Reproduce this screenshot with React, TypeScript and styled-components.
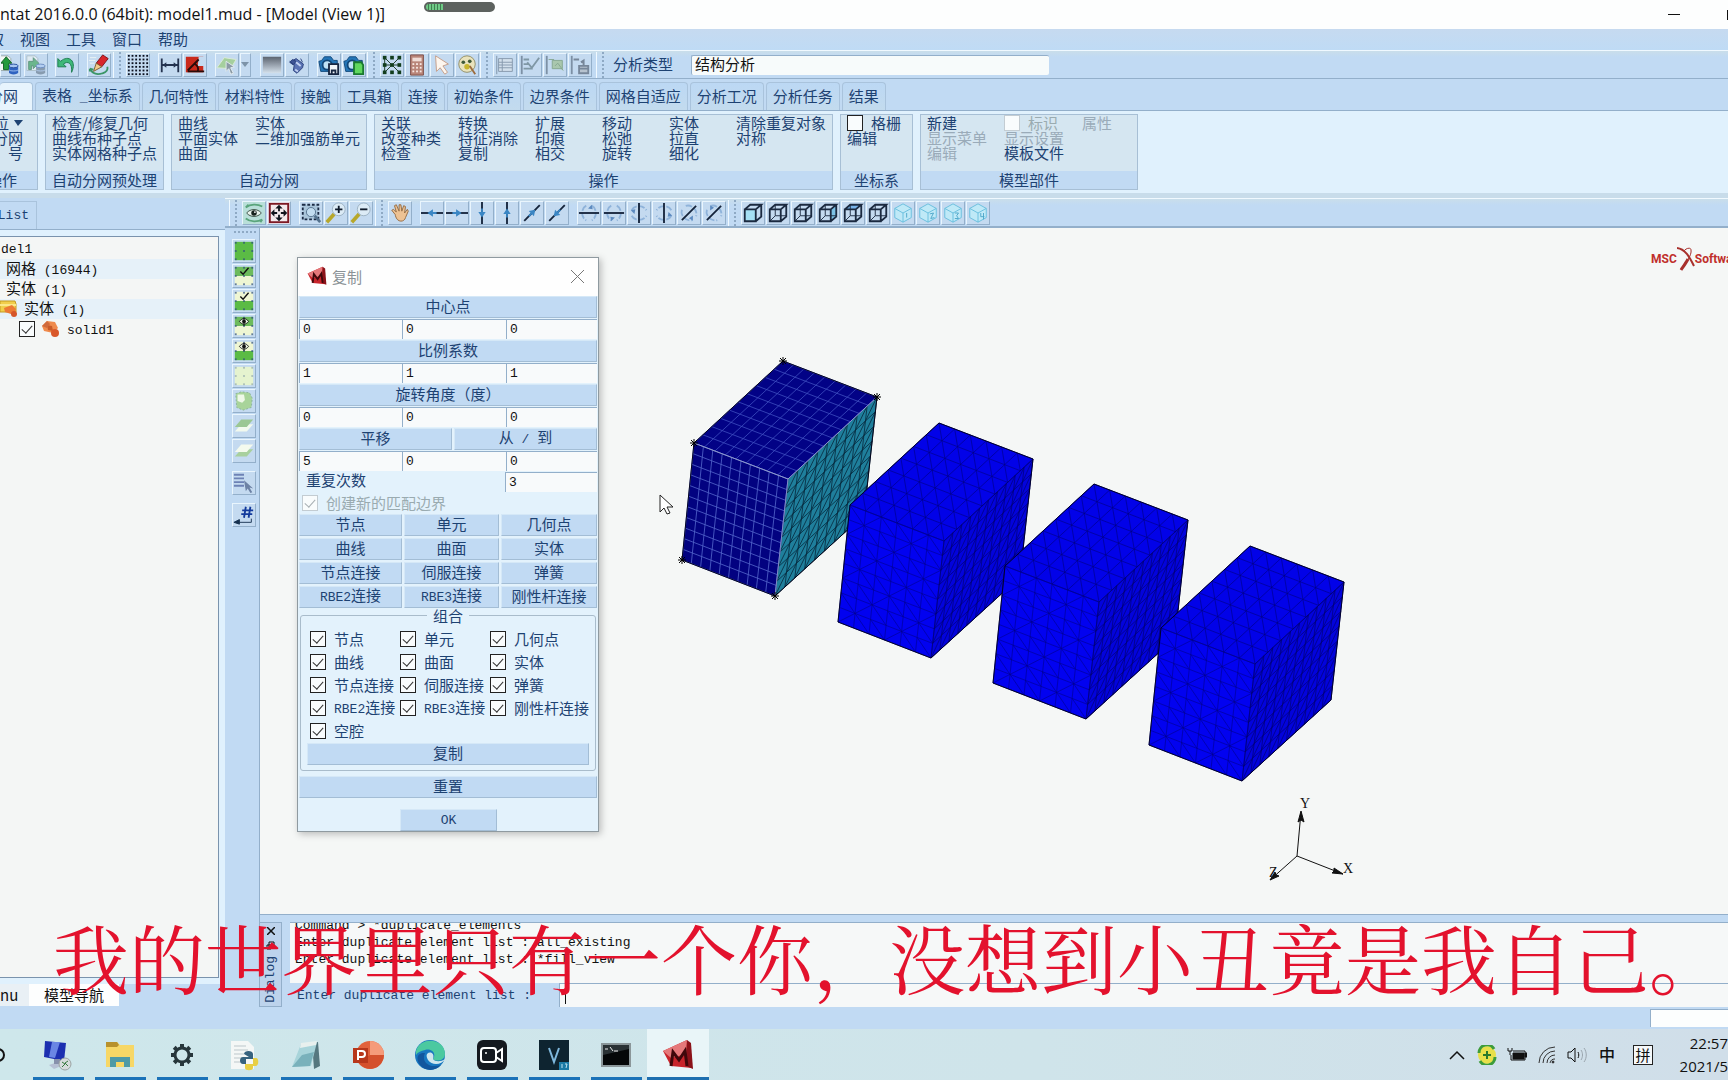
import React from "react";
import styled, { createGlobalStyle, css } from "styled-components";

const ink = "#1d4272";
const line = "#93afca";
const blue = "#c1daf3";
const pale = "#e0f1fd";

const GlobalStyle = createGlobalStyle`
  *, *::before, *::after { box-sizing: border-box; }
  body {
    margin: 0;
    overflow: hidden;
    color: ${ink};
    font: 400 15px/15px "Noto Sans CJK SC", sans-serif;
    white-space: nowrap;
  }
  button, input {
    margin: 0;
    padding: 0;
    border: 0;
    background: none;
    color: inherit;
    font: inherit;
  }
  svg { display: block; flex: none; }
`;

const Latin = styled.span`
  font: 400 13px/15px "Liberation Mono", monospace;
  white-space: pre;
`;

function Mixed({ text }: { text: string }) {
  return (
    <>
      {text.split(/([\x20-\x7e]+)/).map((part, i) =>
        i % 2 ? <Latin key={i}>{part}</Latin> : part
      )}
    </>
  );
}

/* ---------- frame ---------- */

const Window = styled.div`
  position: relative;
  display: flex;
  flex-direction: column;
  height: 100vh;
  overflow: hidden;
  background: ${blue};
`;

const TitleBar = styled.header`
  position: relative;
  display: flex;
  align-items: center;
  height: 29px;
  flex: none;
  background: #fdfefe;
  color: #111;
  font: 400 16px/20px "Noto Sans", sans-serif;
`;

const TitleText = styled.span`
  flex: 1;
  padding-bottom: 2px;
  font-family: "Open Sans", sans-serif;
`;

const BatteryPill = styled.div`
  position: absolute;
  left: 424px;
  top: 2px;
  width: 71px;
  height: 10px;
  border-radius: 5px;
  border: 2px solid #5d625f;
  background: linear-gradient(90deg, transparent 17px, #5d625f 17px),
    repeating-linear-gradient(90deg, #6fca86 0 2px, #3f7f50 2px 3px);
`;

const CaptionButton = styled.button`
  width: 60px;
  height: 28px;
  display: grid;
  place-items: center;
  overflow: hidden;
  &:last-child {
    width: 24px;
    justify-content: end;
  }
`;

const MenuBar = styled.nav`
  display: flex;
  align-items: center;
  gap: 16px;
  height: 22px;
  flex: none;
  padding-bottom: 3px;
  border-bottom: 1px solid #f0f9ff;
  background: linear-gradient(#c6daf0, #bfdbf5);
`;

const MenuItem = styled.button<{ $cut?: number }>`
  ${(p) =>
    p.$cut &&
    css`
      width: ${p.$cut}px;
      overflow: hidden;
      display: flex;
      justify-content: flex-end;
    `}
`;

const Toolbar = styled.div<{ $tall?: boolean }>`
  display: flex;
  align-items: center;
  gap: 1px;
  height: ${(p) => (p.$tall ? 30 : 28)}px;
  flex: none;
  overflow: hidden;
  border-top: ${(p) => (p.$tall ? "1px solid #f0f9ff" : "0")};
  border-bottom: ${(p) => (p.$tall ? 2 : 1)}px solid ${line};
  background: linear-gradient(#cadeea, ${blue} 6px);
`;

const ToolButton = styled.button<{ $lead?: number; $w?: number; $tint?: string }>`
  display: flex;
  align-items: center;
  justify-content: ${(p) => (p.$w ? "flex-end" : "center")};
  width: ${(p) => p.$w ?? 24}px;
  height: 24px;
  flex: none;
  overflow: hidden;
  margin-left: ${(p) => p.$lead ?? 0}px;
  border: 1px solid #e9f5fd;
  border-right-color: ${line};
  border-bottom-color: ${line};
  background: ${(p) => p.$tint ?? "#c4daf0"};
`;

const Grip = styled.i<{ $lead?: number }>`
  width: 12px;
  height: 26px;
  flex: none;
  margin-left: ${(p) => p.$lead ?? 0}px;
  border-left: 1px solid #f0f9ff;
  background: radial-gradient(circle, #8ea9c4 1px, transparent 1px) 4px 3px / 4px 4px repeat-y;
`;

const FieldLabel = styled.label`
  margin: 0 17px 0 4px;
  padding-bottom: 3px;
`;

const AnalysisInput = styled.input`
  width: 358px;
  height: 20px;
  padding: 0 3px 3px;
  border-top: 1px solid ${line};
  border-left: 1px solid ${line};
  border-radius: 2px;
  background: #f7fbfb;
  color: #111;
`;

/* ---------- ribbon ---------- */

const Tabs = styled.div`
  display: flex;
  align-items: flex-end;
  gap: 2px;
  height: 32px;
  flex: none;
  border-bottom: 1px solid ${line};
`;

const Tab = styled.button<{ $active?: boolean }>`
  height: 28px;
  padding: 0 6px 2px;
  border: 1px solid #a9c3dc;
  border-bottom: 0;
  border-radius: 4px 4px 0 0;
  background: ${(p) => (p.$active ? "#e7f4fd" : "linear-gradient(#bcd8f4, #c3dbee)")};
  ${(p) =>
    p.$active &&
    css`
      display: flex;
      align-items: center;
      justify-content: flex-end;
      width: 33px;
      padding: 0 14px 2px 0;
      overflow: hidden;
      border-left: 0;
    `}
`;

const Ribbon = styled.div`
  display: flex;
  gap: 7px;
  height: 82px;
  flex: none;
  padding: 3px 0;
  background: ${pale};
`;

const Strip = styled.div`
  height: 5px;
  flex: none;
  background: #c8dcea;
`;

const Group = styled.section<{ $w: number; $cut?: boolean }>`
  display: flex;
  flex-direction: column;
  width: ${(p) => p.$w}px;
  overflow: hidden;
  border: 1px solid #a7bfd5;
  border-left-width: ${(p) => (p.$cut ? 0 : 1)}px;
  background: #d5e6f1;
`;

const GroupBody = styled.div<{ $cols: string }>`
  display: grid;
  grid-template-columns: ${(p) => p.$cols};
  justify-content: start;
  flex: 1;
  padding: 0 0 0 6px;
`;

const CutBody = styled.div`
  display: flex;
  flex-direction: column;
  align-items: flex-end;
  flex: 1;
  padding: 0 14px 0 0;
`;

const GroupColumn = styled.div`
  display: flex;
  flex-direction: column;
  align-items: flex-start;
`;

const Command = styled.button`
  display: flex;
  align-items: center;
  gap: 5px;
  height: 15px;
  &:disabled { color: #9aabb9; }
`;

const GroupTitle = styled.h2<{ $end?: boolean }>`
  display: flex;
  align-items: center;
  justify-content: ${(p) => (p.$end ? "flex-end" : "center")};
  height: 18px;
  margin: 0;
  padding: 0 ${(p) => (p.$end ? 20 : 0)}px 2px 0;
  background: ${blue};
  font: inherit;
`;

const Tick = styled.input`
  appearance: none;
  position: relative;
  width: 16px;
  height: 16px;
  flex: none;
  border: 1px solid #222;
  background: #f9fcfd;
  &:checked::after {
    content: "";
    position: absolute;
    left: 4px;
    top: 1px;
    width: 6px;
    height: 10px;
    border: solid #333;
    border-width: 0 1px 1px 0;
    transform: rotate(42deg);
  }
  &:disabled { border-color: #c3ccd2; }
  &:disabled::after { border-color: #a7afb3; }
`;

const TickLabel = styled.label<{ $dim?: boolean }>`
  display: flex;
  align-items: center;
  gap: 8px;
  height: 15px;
  color: ${(p) => (p.$dim ? "#9aabb0" : "inherit")};
`;

/* ---------- body ---------- */

const Body = styled.div`
  display: flex;
  flex: 1;
  min-height: 0;
`;

const SidePanel = styled.aside`
  display: flex;
  flex-direction: column;
  width: 225px;
  flex: none;
  padding-bottom: 1px;
`;

const SideHead = styled.div`
  height: 32px;
  flex: none;
  padding-top: 3px;
  border-bottom: 1px solid ${line};
`;

const SideTab = styled.button`
  display: flex;
  align-items: center;
  justify-content: flex-end;
  width: 37px;
  height: 28px;
  padding-right: 7px;
  overflow: hidden;
  border: solid #a9c3dc;
  border-width: 1px 1px 0 0;
`;

const SideBody = styled.div`
  flex: 1;
  display: flex;
  padding: 6px 6px 6px 0;
  background: ${pale};
`;

const Tree = styled.ul`
  flex: 1;
  margin: 0;
  padding: 2px 0;
  list-style: none;
  border: 1px solid #7a93ad;
  border-left: 0;
  background: #f4f6f5;
  color: #111;
`;

const TreeRow = styled.li<{ $indent: number; $alt?: boolean }>`
  display: flex;
  align-items: center;
  gap: 6px;
  height: 20px;
  padding-left: ${(p) => p.$indent}px;
  background: ${(p) => (p.$alt ? "#e6f1f9" : "none")};
`;

const BottomTabs = styled.div`
  display: flex;
  height: 22px;
  flex: none;
  background: ${blue};
`;

const BottomTab = styled.button<{ $active?: boolean }>`
  width: ${(p) => (p.$active ? 90 : 29)}px;
  height: 22px;
  padding-bottom: 2px;
  overflow: hidden;
  background: ${(p) => (p.$active ? "#fdfefe" : "#e9f0f5")};
  color: #111;
  text-align: ${(p) => (p.$active ? "center" : "left")};
`;

const WorkArea = styled.main`
  display: flex;
  flex-direction: column;
  flex: 1;
  min-width: 0;
`;

const WorkRow = styled.div`
  display: flex;
  flex: 1;
  min-height: 0;
`;

const SideTools = styled.div`
  display: flex;
  flex-direction: column;
  align-items: center;
  gap: 1px;
  width: 35px;
  flex: none;
  padding: 0 0 0 4px;
  border-right: 1px solid ${line};
`;

const SideGrip = styled.i`
  width: 23px;
  height: 10px;
  background: radial-gradient(circle, #8ea9c4 1px, transparent 1px) 0 2px / 4px 4px repeat-x;
`;

const SideGap = styled.i`
  height: 6px;
`;

const Stack = styled.div`
  display: flex;
  flex-direction: column;
  flex: 1;
  min-width: 0;
`;

const Viewport = styled.section`
  position: relative;
  flex: 1;
  overflow: hidden;
  border-bottom: 1px solid ${line};
  background: #f5f7f6;
`;

const Scene = styled.svg`
  position: absolute;
  left: 0;
  top: 0;
`;

const Brand = styled.div`
  position: absolute;
  right: 0;
  top: 18px;
  display: flex;
  align-items: center;
  width: 77px;
  height: 26px;
  overflow: hidden;
  color: #c02f2c;
  font: 700 12px/26px Roboto, sans-serif;
`;

/* ---------- dialog ---------- */

const Dialog = styled.form`
  position: absolute;
  left: 37px;
  top: 29px;
  width: 302px;
  padding: 0 1px;
  border: 1px solid #8f9aa0;
  background: #e3f2fc;
  box-shadow: 2px 2px 7px #00000040;
`;

const DialogTitle = styled.div`
  display: flex;
  align-items: center;
  gap: 5px;
  height: 38px;
  margin: 0 -1px;
  padding: 0 14px 2px 9px;
  background: #fefefe;
  color: #8b9296;
`;

const Grow = styled.span`
  flex: 1;
`;

const PushButton = styled.button`
  height: 22px;
  padding-bottom: 3px;
  border: 1px solid #d5e8f7;
  border-right-color: #a3bdd5;
  border-bottom-color: #a3bdd5;
  background: ${blue};
`;

const Columns = styled.div<{ $cols: string; $gap?: number; $pad?: string }>`
  display: grid;
  grid-template-columns: ${(p) => p.$cols};
  gap: ${(p) => p.$gap ?? 0}px;
  padding: ${(p) => p.$pad ?? "0"};
`;

const NumberInput = styled.input`
  width: 100%;
  min-width: 0;
  height: 20px;
  padding: 0 3px;
  border-top: 1px solid ${line};
  border-left: 1px solid ${line};
  background: #f8fafb;
  color: #111;
  font: 400 13px/18px "Liberation Mono", monospace;
`;

const RepeatRow = styled.div`
  display: flex;
  align-items: flex-start;
  justify-content: space-between;
  height: 19px;
  padding-left: 7px;
`;

const RepeatInput = styled(NumberInput)`
  width: 92px;
`;

const MatchRow = styled.div`
  display: flex;
  align-items: center;
  height: 23px;
  padding-left: 3px;
`;

const Combo = styled.fieldset`
  min-width: 0;
  margin: 0 1px 5px;
  padding: 4px 6px 5px;
  border: 1px solid #a9bccb;
  border-radius: 3px;
`;

const ComboLegend = styled.legend`
  margin: 0 auto;
  padding: 0 6px;
`;

const ComboGrid = styled.div`
  display: grid;
  grid-template-columns: 90px 90px 1fr;
  grid-auto-rows: 23px;
  align-items: center;
  margin-right: -5px;
  padding: 0 0 1px 3px;
`;

const Wide = styled(PushButton)`
  width: 100%;
  display: block;
`;

const OkButton = styled(PushButton)`
  display: block;
  width: 97px;
  margin: 11px auto 0 101px;
`;

/* ---------- log ---------- */

const LogPanel = styled.section`
  display: flex;
  height: 92px;
  flex: none;
  padding-top: 7px;
`;

const LogHandle = styled.div`
  display: flex;
  flex-direction: column;
  align-items: center;
  gap: 6px;
  width: 22px;
  flex: none;
  padding-top: 4px;
  border: 1px solid ${line};
  border-left: 0;
  background: #bdd3ec;
`;

const LogName = styled.span`
  writing-mode: vertical-rl;
  transform: rotate(180deg);
  font: 400 13px/18px "Liberation Mono", monospace;
`;

const LogMain = styled.div`
  display: flex;
  flex-direction: column;
  flex: 1;
  min-width: 0;
  margin-left: 8px;
  border-top: 1px solid ${line};
`;

const LogText = styled.div`
  display: flex;
  flex-direction: column;
  justify-content: flex-end;
  height: 60px;
  padding: 0 5px 15px;
  overflow: hidden;
  background: #f6f8f8;
  color: #111;
  font: 400 13px/17px "Liberation Mono", monospace;
  white-space: pre;
`;

const Prompt = styled.label`
  display: flex;
  align-items: center;
  flex: 1;
  padding-left: 7px;
  white-space: pre;
  font: 400 13px/17px "Liberation Mono", monospace;
`;

const PromptInput = styled.input`
  flex: 1;
  align-self: stretch;
  margin-left: 28px;
  padding-left: 5px;
  border: solid ${line};
  border-width: 1px 0 0 1px;
  background: linear-gradient(#111, #111) 5px 3px / 1px 17px no-repeat, #f6f8f8;
  color: #111;
`;

const Status = styled.footer`
  display: flex;
  justify-content: flex-end;
  align-items: center;
  height: 22px;
  flex: none;
`;

const StatusBox = styled.div`
  width: 78px;
  height: 18px;
  border-top: 1px solid ${line};
  border-left: 1px solid ${line};
  background: #fcfefe;
`;

/* ---------- task bar ---------- */

const TaskBar = styled.footer`
  display: flex;
  align-items: stretch;
  height: 51px;
  flex: none;
  background: linear-gradient(90deg, #cee7eb, #cfe4ea 60%, #d0dee9);
  color: #111;
`;

const TaskStart = styled.button`
  width: 27px;
  display: flex;
  align-items: center;
`;

const TaskItem = styled.button<{ $active?: boolean }>`
  display: grid;
  place-items: center;
  width: 62px;
  flex: none;
  background: ${(p) =>
    p.$active
      ? "linear-gradient(#1f6fb0, #1f6fb0) bottom / 100% 3px no-repeat, #e9f5f8"
      : "linear-gradient(#1b72b8, #1b72b8) bottom / 51px 3px no-repeat"};
`;

const Tray = styled.div`
  display: flex;
  align-items: center;
  margin-left: auto;
`;

const TrayButton = styled.button<{ $w?: number }>`
  display: grid;
  place-items: center;
  width: ${(p) => p.$w ?? 30}px;
  height: 50px;
  font-weight: 500;
  font-size: 16px;
`;

const Ime = styled.span`
  display: grid;
  place-items: center;
  width: 20px;
  height: 20px;
  border: 1px solid #222;
  background: #f5f8fa;
  font-weight: 400;
  font-size: 15px;
`;

const Clock = styled.time`
  display: flex;
  flex-direction: column;
  align-items: flex-end;
  width: 64px;
  font: 400 15px/23px "Open Sans", sans-serif;
`;

const Caption = styled.p`
  position: absolute;
  left: 53px;
  bottom: 85px;
  margin: 0;
  pointer-events: none;
  color: #e3122d;
  font: 400 76px/76px "Noto Serif CJK SC", "Noto Sans CJK SC", serif;
`;

/* ---------- icons ---------- */

const Ico = ({ children, size = 22, box = 24 }: { children: React.ReactNode; size?: number; box?: number }) => (
  <svg width={size} height={size} viewBox={`0 0 ${box} ${box}`} fill="none" aria-hidden="true">
    {children}
  </svg>
);

const dots = (n: number, step: number, start: number, r: number, fill: string) => {
  const out: React.ReactNode[] = [];
  for (let i = 0; i < n; i++)
    for (let j = 0; j < n; j++)
      out.push(<rect key={`${i}-${j}`} x={start + i * step} y={start + j * step} width={r} height={r} fill={fill} />);
  return out;
};

const Db = ({ up, dim }: { up?: boolean; dim?: boolean }) => (
  <Ico>
    <g opacity={dim ? 0.55 : 1}>
      <path d="M2 2h9l3 3v13H2z" fill="#f5f8f4" stroke="#9aa" />
      <path d={up ? "M9 3l6 7h-3v7H6v-7H3z" : "M4 17V8h5V4l6 6-6 6v-3H7v4z"} fill="#239a3c" stroke="#0d5c22" />
      <path d="M12 13v7c0 3 10 3 10 0v-7z" fill={dim ? "#56687a" : "#2f63c0"} />
      <ellipse cx="17" cy="13" rx="5" ry="2" fill="#a6c6f2" stroke="#264f9c" />
      <path d="M12 17c0 2 10 2 10 0" stroke="#a6c6f2" />
    </g>
  </Ico>
);
const Undo = () => (
  <Ico>
    <path d="M2 5v9h9l-3-3c5-4 10-1 9 9 6-12-3-20-12-12z" fill="#3fb878" stroke="#187a4c" />
  </Ico>
);
const Pen = () => (
  <Ico>
    <path d="M9 10l7-9 6 4-7 9z" fill="#d8262c" stroke="#7d1216" />
    <path d="M9 10l6 4-9 5z" fill="#f3c98a" stroke="#7a5a2c" />
    <path d="M2 16c3 6 8 7 14 5m5-7c1 3-1 6-5 7M2 16v3m0-3l4 1" stroke="#3b9567" strokeWidth="2" />
    <path d="M2 4h7M1 7h7M2 10h5" stroke="#eef4f4" />
  </Ico>
);
const Grid = () => <Ico>{dots(6, 4, 1, 2, "#0c1220")}</Ico>;
const Ruler = () => (
  <Ico>
    <path d="M3 5v15M21 5v15M4 12h16" stroke="#24334f" strokeWidth="2" />
    <path d="M4 12l4-3v6zM20 12l-4-3v6z" fill="#24334f" />
  </Ico>
);
const Angle = () => (
  <Ico>
    <path d="M2 3h19v17H2z" fill="#c92a1c" />
    <path d="M16 3h6v10h-7z" fill="#c4daf0" />
    <path d="M4 18L16 6M4 19h18M12 11c3 2 4 5 3 8" stroke="#2b0c0a" strokeWidth="2" />
  </Ico>
);
const PickFace = () => (
  <Ico>
    <path d="M1 15L9 4l13 2-6 10z" fill="#a5cf9e" stroke="#dcebd8" />
    <path d="M11 8l9 6-4 1 3 6-3 1-2-6-3 3z" fill="#8b9aa5" stroke="#e5edf2" />
  </Ico>
);
const Shade = () => (
  <Ico>
    <defs>
      <linearGradient id="shade" x2="0" y2="1">
        <stop stopColor="#5c6470" />
        <stop offset="1" stopColor="#d5e1ec" />
      </linearGradient>
    </defs>
    <path d="M2 3h20v18H2z" fill="url(#shade)" />
  </Ico>
);
const Lamp = () => (
  <Ico>
    <path d="M6 8l5-3 8 6-1 4-6 6-4-3 1-6z" fill="#5b73b4" stroke="#2b3f7c" />
    <path d="M4 8l4 3M16 5l2 4M7 6l-3 3 4 3 3-4z" fill="#3f5596" stroke="#2b3f7c" />
    <path d="M11 9l5 4M10 17l3 2" stroke="#c3d2f2" strokeWidth="2" />
  </Ico>
);
const Camera = ({ save }: { save?: boolean }) => (
  <Ico>
    <path d="M1 8l3-1 3-4h7l3 4h4v12H3z" fill="#2576b8" stroke="#12487a" />
    <circle cx="10" cy="12" r="5" fill="#bfe2f7" stroke="#12487a" strokeWidth="2" />
    {save ? (
      <path d="M12 11h10v11H12zM15 18h4v4h-4z" fill="#f2f6fa" stroke="#182742" strokeWidth="2" />
    ) : (
      <path d="M12 9h8l2 3v10H12z" fill="#5fd75e" stroke="#1a7a30" strokeWidth="2" />
    )}
  </Ico>
);
const Nodes = () => (
  <Ico>
    <path d="M4 4l8 8 8-8M4 12h16M4 20l8-8 8 8M4 4v16" stroke="#17351f" />
    {dots(3, 8, 2, 4, "#123d1c")}
  </Ico>
);
const Calc = () => (
  <Ico>
    <path d="M5 1h14v22H5z" fill="#b98579" stroke="#7c4b44" />
    <path d="M7 4h10v4H7z" fill="#f0dcd6" />
    {[0, 1, 2].map((i) => [0, 1, 2].map((j) => (
      <rect key={`${i}${j}`} x={7 + i * 4} y={10 + j * 4} width="2" height="2" fill="#f6e7e2" />
    )))}
  </Ico>
);
const Cursor = () => (
  <Ico>
    <path d="M5 2l14 9-6 2 5 7-3 2-5-7-4 4z" fill="#fdf6ee" stroke="#c39a84" />
  </Ico>
);
const Palette = () => (
  <Ico>
    <circle cx="12" cy="11" r="9" fill="#e9e3bd" stroke="#8f8c66" />
    <circle cx="8" cy="9" r="2" fill="#3f5a38" />
    <circle cx="15" cy="8" r="2" fill="#3f5a38" />
    <circle cx="12" cy="14" r="3" fill="#c7b52c" />
    <path d="M15 13l6 9" stroke="#9c6c3d" strokeWidth="2" />
  </Ico>
);
const Sheet = ({ kind }: { kind: number }) => (
  <Ico>
    <path d="M3 2v20" stroke="#7d90a5" strokeWidth={kind ? 2 : 1} />
    {kind === 0 && <path d="M5 5h15v14H5zM5 9h15M5 12h15M5 15h15M9 5v14" stroke="#8497ac" fill="#d3e0ec" />}
    {kind === 1 && <path d="M5 6h6M5 11h6M5 16h10M9 9l5 6 8-11" stroke="#7f97a5" strokeWidth="2" />}
    {kind === 2 && <path d="M5 6h6M9 7h11v9H9zM12 13l3-3 6 8" stroke="#84a68f" fill="#a9c7ae" />}
    {kind === 3 && <path d="M11 13h10v8H11zM11 16h10M16 13V7l-3 2M5 6h6" stroke="#77879a" strokeWidth="2" fill="#b6c2ce" />}
  </Ico>
);

const Eye = () => (
  <Ico>
    <path d="M3 6c5-4 13-4 18-1M21 19c-5 3-13 3-18-1M3 6l3-3M21 19l-2 3" stroke="#5aa57c" strokeWidth="2" />
    <path d="M4 12c4-5 12-5 16 0-4 5-12 5-16 0z" fill="#e9f3ec" stroke="#33483d" />
    <circle cx="12" cy="12" r="3" fill="#18221d" />
    <circle cx="13" cy="11" r="1" fill="#fff" />
  </Ico>
);
const Fit = () => (
  <Ico>
    <path d="M2 2h20v20H2z" fill="#f4e9ec" stroke="#7d1823" strokeWidth="2" />
    <path d="M12 3l4 4h-3v3h-2V7H8zM12 21l4-4h-3v-3h-2v3H8zM3 12l4-4v3h3v2H7v3zM21 12l-4-4v3h-3v2h3v3z" fill="#10131c" />
  </Ico>
);
const ZoomBox = () => (
  <Ico>
    <path d="M3 3h17v16H3z" stroke="#1b2b45" strokeWidth="2" strokeDasharray="3 2" fill="#a9c4da" />
    <circle cx="12" cy="11" r="5" fill="#c2dcf0" stroke="#53718d" />
    <path d="M16 15l6 7" stroke="#53718d" strokeWidth="3" />
  </Ico>
);
const Lens = ({ minus }: { minus?: boolean }) => (
  <Ico>
    <path d="M2 22l8-9" stroke="#b7a72b" strokeWidth="4" />
    <circle cx="15" cy="8" r="7" fill="#dcebf6" stroke="#9ab0c2" />
    <path d={minus ? "M11 8h8" : "M11 8h8M15 4v8"} stroke="#111b2b" strokeWidth="2" />
  </Ico>
);
const Hand = () => (
  <Ico>
    <path d="M7 14L3 9l2-1 3 3-2-7 2-1 3 7V3h2l1 7 2-6 2 1-1 7 3-4 1 2-3 7c-1 5-9 6-11-2z" fill="#edc294" stroke="#94683d" />
  </Ico>
);
const Move = ({ turn, flip }: { turn: number; flip?: boolean }) => (
  <Ico>
    <g transform={`rotate(${turn} 12 12)`}>
      <path d="M0 12h24" stroke="#14233a" strokeWidth="2" />
      <path d={flip ? "M17 12l-6-4v3H7v2h4v3z" : "M7 12l6-4v3h4v2h-4v3z"} fill="#3a86c4" />
    </g>
  </Ico>
);
const Spin = ({ turn, flip }: { turn: number; flip?: boolean }) => (
  <Ico>
    <g transform={`rotate(${turn} 12 12)`}>
      <path d="M9 4c-6 3-6 13 0 16M15 4c6 3 6 13 0 16" stroke="#8fb3da" strokeWidth="2" strokeDasharray="7 2" />
      <path d={flip ? "M9 21l4-4-5-1z" : "M15 3l-4 4 5 1z"} fill="#5c8ac0" />
      <path d="M1 12h22" stroke="#14233a" strokeWidth="2" />
    </g>
  </Ico>
);
const Cube = ({ kind }: { kind: number }) => (
  <Ico>
    {kind === 0 && <path d="M3 8h12v13H3z" fill="#a5e0f4" />}
    {kind === 3 && <path d="M15 8l6-5v13l-6 5z" fill="#7cc2e6" />}
    {kind === 4 && <path d="M3 8l6-5h12l-6 5z" fill="#79b4ea" />}
    <path d="M3 8h12v13H3zM3 8l6-5h12l-6 5M21 3v13l-6 5" stroke="#1b2a40" strokeWidth="2" />
    {kind > 0 && <path d="M9 3v12h12M9 15l-6 6" stroke="#1b2a40" />}
  </Ico>
);
const IsoCube = ({ n }: { n: number }) => (
  <Ico>
    <path d="M12 2l9 5v10l-9 5-9-5V7z" fill="#bfe9f7" stroke="#66bddd" />
    <path d="M3 7l9 5 9-5M12 12v10" stroke="#66bddd" />
    <path d={["M16 12v5", "M14 13l4-1-3 6 4-1", "M14 12h4l-2 3 2 3h-4", "M15 12v4h4M18 12v7"][n]} stroke="#4aa5c8" />
  </Ico>
);

const Mesh = ({ top, bottom, mark, dim }: { top: string; bottom: string; mark?: string; dim?: boolean }) => (
  <Ico>
    <path d="M2 2h20v10H2z" fill={top} />
    <path d="M2 12h20v10H2z" fill={bottom} />
    <g opacity={dim ? 0.3 : 0.7}>
      {[2, 11, 20].map((x) => [2, 11, 20].map((y) => (
        <rect key={`${x}-${y}`} x={x} y={y} width="2" height="2" fill="#2a4a80" />
      )))}
    </g>
    {mark === "check" && <path d="M8 7l3 3 6-7" stroke="#111" strokeWidth="1.5" />}
    {mark === "eye" && (
      <>
        <path d="M7 7c3-4 7-4 10 0-3 4-7 4-10 0z" fill="#e8f0e0" stroke="#111" />
        <path d="M12 3v9" stroke="#111" />
        <circle cx="12" cy="7" r="2" fill="#111" />
      </>
    )}
  </Ico>
);
const Slab = ({ light }: { light?: boolean }) => (
  <Ico>
    <path d="M2 18L9 10h13l-7 8z" fill={light ? "#a8d09e" : "#f2f9ee"} />
    <path d="M2 13L9 5h13l-7 8z" fill={light ? "#f4faee" : "#9bc794"} />
  </Ico>
);
const Blob = () => (
  <Ico>
    <path d="M3 4l6-2 9 1 3 6-1 10-9 3-7-3z" fill="#a8d49a" stroke="#8ab0a0" strokeDasharray="2 2" />
    <path d="M5 5h7l1 6-3 3-5-2z" fill="#eef8e8" />
  </Ico>
);
const ListPick = () => (
  <Ico>
    <path d="M1 3h11M1 7h11M1 11h11M1 15h11" stroke="#6d82b5" strokeWidth="2" />
    <path d="M12 9l10 9-4-1 3 5-2 1-3-5-2 3z" fill="#6d82a5" />
  </Ico>
);
const Hash = () => (
  <Ico>
    <path d="M14 3l-2 12M19 3l-2 12M10 7h12M9 11h12" stroke="#123a9c" strokeWidth="2" />
    <path d="M20 16v4H7M7 17l-6 3 6 2z" stroke="#16304e" fill="none" />
    <path d="M7 17l-6 3 6 2z" fill="#16304e" />
  </Ico>
);

const MLogo = ({ size }: { size: number }) => (
  <svg width={size} height={size} viewBox="0 0 32 32" aria-hidden="true">
    <path d="M1 12L25 1l5 28-21-2z" fill="#c8242b" />
    <path d="M1 12L25 1l-1 14-15 4z" fill="#e5787a" />
    <path d="M25 1l4 3 2 26-7-3z" fill="#8b1219" />
    <path d="M9 27l2-14 6 8 6-9 2 15" fill="none" stroke="#3f080b" strokeWidth="3" />
  </svg>
);
const Folder = () => (
  <svg width="18" height="18" viewBox="0 0 18 18" aria-hidden="true">
    <path d="M0 1h15l1 3v8H0z" fill="#f1cf4c" stroke="#c49a20" />
    <path d="M0 4h16v2H0z" fill="#fbe88a" />
    <path d="M4 8l8-3 4 4-2 6-9-3z" fill="#ec7a35" />
    <circle cx="14" cy="14" r="3" fill="#d5562a" />
  </svg>
);
const Solid = () => (
  <svg width="20" height="18" viewBox="0 0 20 18" aria-hidden="true">
    <path d="M1 6l5-5 8 1 3 6-5 5-9-2z" fill="#ef8a4c" />
    <path d="M6 5l5 1 1 5-5-1z" fill="#c95a28" />
    <circle cx="14" cy="13" r="4" fill="#d9582a" />
    <path d="M1 6l5-5 3 3-3 4z" fill="#d06a3c" />
  </svg>
);

/* ---------- model ---------- */

type Pt = [number, number];
const quadPoint = (q: Pt[], u: number, v: number): Pt => {
  const mix = (i: 0 | 1) =>
    q[0][i] * (1 - u) * (1 - v) + q[1][i] * u * (1 - v) + q[2][i] * u * v + q[3][i] * (1 - u) * v;
  return [Math.round(mix(0) * 10) / 10, Math.round(mix(1) * 10) / 10];
};

function meshPath(q: Pt[], cols: number, rows: number, diagonal: "none" | "up" | "down" | "zigzag") {
  const seg = (a: Pt, b: Pt) => `M${a[0]} ${a[1]}L${b[0]} ${b[1]}`;
  let d = "";
  for (let i = 0; i <= cols; i++) d += seg(quadPoint(q, i / cols, 0), quadPoint(q, i / cols, 1));
  for (let j = 0; j <= rows; j++) d += seg(quadPoint(q, 0, j / rows), quadPoint(q, 1, j / rows));
  if (diagonal !== "none")
    for (let i = 0; i < cols; i++)
      for (let j = 0; j < rows; j++) {
        const down = diagonal === "down" || (diagonal === "zigzag" && (i + j) % 3 !== 1);
        d += down
          ? seg(quadPoint(q, i / cols, j / rows), quadPoint(q, (i + 1) / cols, (j + 1) / rows))
          : seg(quadPoint(q, (i + 1) / cols, j / rows), quadPoint(q, i / cols, (j + 1) / rows));
      }
  return d;
}

const A: Pt = [523, 133];
const B: Pt = [617, 169];
const C: Pt = [434, 215];
const D: Pt = [528, 251];
const E: Pt = [422, 332];
const F: Pt = [515, 368];
const G: Pt = [604, 287];
const poly = (pts: Pt[]) => pts.map((p) => p.join(",")).join(" ");
const top = [A, B, D, C];
const front = [C, D, F, E];
const right = [D, B, G, F];

const SourceBlock = () => (
  <g>
    <polygon points={poly(right)} fill="#1f7f9c" />
    <path d={meshPath(right, 9, 8, "up")} stroke="#06283c" strokeOpacity="0.8" />
    <polygon points={poly(top)} fill="#020286" />
    <path d={meshPath(top, 9, 10, "none")} stroke="#3f4fc0" strokeOpacity="0.8" />
    <polygon points={poly(front)} fill="#020280" />
    <path d={meshPath(front, 10, 11, "none")} stroke="#5061c8" strokeOpacity="0.85" />
    <polyline points={poly([C, D, B])} stroke="#8f9acb" />
    <polyline points={poly([D, F])} stroke="#7f8ac0" />
    <polygon points={poly([A, B, G, F, E, C])} stroke="#05051c" />
    {[A, B, C, E, F].map(([x, y]) => (
      <path key={x} d={`M${x - 4} ${y}h8M${x} ${y - 4}v8M${x - 3} ${y - 3}l6 6M${x + 3} ${y - 3}l-6 6`} stroke="#000" />
    ))}
  </g>
);

const CopyBlock = ({ n }: { n: number }) => (
  <g transform={`translate(${Math.round(n * 155.7)} ${Math.round(n * 61.7)})`}>
    <polygon points={poly([A, B, G, F, E, C])} fill="#0202f0" />
    <polygon points={poly(right)} fill="#0303dc" />
    <polygon points={poly(top)} fill="#0202e8" />
    <path d={meshPath(top, 6, 7, "down")} stroke="#02027e" strokeOpacity="0.6" />
    <path d={meshPath(front, 6, 8, "zigzag")} stroke="#02028c" strokeOpacity="0.6" />
    <path d={meshPath(right, 10, 8, "up")} stroke="#020270" strokeOpacity="0.65" />
    <polygon points={poly([A, B, G, F, E, C])} stroke="#02022c" />
  </g>
);

const ModelScene = () => (
  <Scene width="1200" height="687" viewBox="0 0 1200 687" fill="none" role="img" aria-label="Model view">
    <SourceBlock />
    <CopyBlock n={1} />
    <CopyBlock n={2} />
    <CopyBlock n={3} />
    <path d="M400 267v17l4-4 3 6 3-1-3-6h6z" fill="#fff" stroke="#222" />
    <g stroke="#111">
      <path d="M1037 628l4-44M1037 628l46 18M1037 628l-27 24" />
      <path d="M1041 583l-3 11 3-2 3 2zM1083 646l-11-1 2-2 0-3zM1010 652l5-8 1 3 3 1z" fill="#111" />
    </g>
    <g fill="#111" fontFamily="Liberation Serif, serif" fontSize="14">
      <text x="1040" y="580">Y</text>
      <text x="1083" y="645">X</text>
      <text x="1009" y="649">Z</text>
    </g>
  </Scene>
);

/* ---------- data ---------- */

const tabs = ["表格 _坐标系", "几何特性", "材料特性", "接触", "工具箱", "连接", "初始条件", "边界条件", "网格自适应", "分析工况", "分析任务", "结果"];

const groups = [
  { title: "自动分网预处理", w: 119, cols: "max-content", items: [["检查/修复几何", "曲线布种子点", "实体网格种子点"]] },
  { title: "自动分网", w: 196, cols: "77px max-content", items: [["曲线", "平面实体", "曲面"], ["实体", "二维加强筋单元"]] },
  {
    title: "操作",
    w: 459,
    cols: "77px 77px 67px 67px 67px max-content",
    items: [
      ["关联", "改变种类", "检查"],
      ["转换", "特征消除", "复制"],
      ["扩展", "印痕", "相交"],
      ["移动", "松弛", "旋转"],
      ["实体", "拉直", "细化"],
      ["清除重复对象", "对称"],
    ],
  },
];

const actions = ["节点", "单元", "几何点", "曲线", "曲面", "实体", "节点连接", "伺服连接", "弹簧", "RBE2连接", "RBE3连接", "刚性杆连接"];

function Triple({ label, values }: { label: string; values: string[] }) {
  return (
    <Columns $cols="103px 104px 1fr" $pad="1px 0">
      {values.map((v, i) => (
        <NumberInput key={i} aria-label={`${label} ${"XYZ"[i]}`} defaultValue={v} />
      ))}
    </Columns>
  );
}

function CopyDialog() {
  return (
    <Dialog onSubmit={(e) => e.preventDefault()}>
      <DialogTitle>
        <MLogo size={20} />
        <Grow>复制</Grow>
        <button type="button" aria-label="关闭">
          <svg width="13" height="13" viewBox="0 0 13 13" stroke="#777" fill="none">
            <path d="M0 0l13 13M13 0L0 13" />
          </svg>
        </button>
      </DialogTitle>
      <Wide type="button">中心点</Wide>
      <Triple label="中心点" values={["0", "0", "0"]} />
      <Wide type="button">比例系数</Wide>
      <Triple label="比例系数" values={["1", "1", "1"]} />
      <Wide type="button">旋转角度（度）</Wide>
      <Triple label="旋转角度" values={["0", "0", "0"]} />
      <Columns $cols="153px 1fr" $gap={2}>
        <PushButton type="button">平移</PushButton>
        <PushButton type="button"><Mixed text="从 / 到" /></PushButton>
      </Columns>
      <Triple label="平移" values={["5", "0", "0"]} />
      <RepeatRow>
        <label htmlFor="repeat">重复次数</label>
        <RepeatInput id="repeat" defaultValue="3" />
      </RepeatRow>
      <MatchRow>
        <TickLabel $dim>
          <Tick type="checkbox" defaultChecked disabled />
          创建新的匹配边界
        </TickLabel>
      </MatchRow>
      <Columns $cols="103px 95px 1fr" $gap={2}>
        {actions.map((a) => (
          <PushButton type="button" key={a}><Mixed text={a} /></PushButton>
        ))}
      </Columns>
      <Combo>
        <ComboLegend>组合</ComboLegend>
        <ComboGrid>
          {[...actions, "空腔"].map((a) => (
            <TickLabel key={a}>
              <Tick type="checkbox" defaultChecked />
              <span><Mixed text={a} /></span>
            </TickLabel>
          ))}
        </ComboGrid>
        <Wide type="button">复制</Wide>
      </Combo>
      <Wide type="reset">重置</Wide>
      <OkButton type="submit"><Mixed text="OK" /></OkButton>
    </Dialog>
  );
}

function MainToolbar() {
  return (
    <Toolbar>
      <ToolButton $w={21} aria-label="打开"><Db up /></ToolButton>
      <ToolButton $lead={2} aria-label="保存"><Db dim /></ToolButton>
      <ToolButton $lead={6} aria-label="撤销"><Undo /></ToolButton>
      <ToolButton $lead={7} aria-label="重绘"><Pen /></ToolButton>
      <Grip $lead={1} />
      <ToolButton aria-label="栅格"><Grid /></ToolButton>
      <ToolButton $lead={7} aria-label="距离"><Ruler /></ToolButton>
      <ToolButton aria-label="角度"><Angle /></ToolButton>
      <ToolButton $lead={7} aria-label="选择面"><PickFace /></ToolButton>
      <ToolButton $w={11} aria-label="更多">
        <svg width="9" height="6" viewBox="0 0 9 6"><path d="M0 0h8L4 5z" fill="#7d93a8" /></svg>
      </ToolButton>
      <ToolButton $lead={8} aria-label="渐变"><Shade /></ToolButton>
      <ToolButton aria-label="灯光"><Lamp /></ToolButton>
      <ToolButton $lead={7} aria-label="保存快照"><Camera save /></ToolButton>
      <ToolButton aria-label="快照"><Camera /></ToolButton>
      <Grip />
      <ToolButton aria-label="节点图"><Nodes /></ToolButton>
      <ToolButton aria-label="计算器"><Calc /></ToolButton>
      <ToolButton aria-label="指针"><Cursor /></ToolButton>
      <ToolButton aria-label="颜色"><Palette /></ToolButton>
      <Grip />
      {[0, 1, 2, 3].map((k) => (
        <ToolButton key={k} aria-label={`历程 ${k + 1}`}><Sheet kind={k} /></ToolButton>
      ))}
      <Grip $lead={3} />
      <FieldLabel htmlFor="analysis">分析类型</FieldLabel>
      <AnalysisInput id="analysis" defaultValue="结构分析" />
    </Toolbar>
  );
}

function ViewToolbar() {
  const turns: [number, boolean][] = [[0, false], [0, true], [-90, false], [90, false], [-45, true], [-45, false]];
  return (
    <Toolbar $tall>
      <Grip $lead={4} />
      <ToolButton $tint="#b9dfd9" aria-label="刷新视图"><Eye /></ToolButton>
      <ToolButton $tint="#e2d5df" aria-label="充满视图"><Fit /></ToolButton>
      <ToolButton $lead={7} aria-label="框选缩放"><ZoomBox /></ToolButton>
      <ToolButton aria-label="放大"><Lens /></ToolButton>
      <ToolButton aria-label="缩小"><Lens minus /></ToolButton>
      <Grip $lead={1} />
      <ToolButton aria-label="平移"><Hand /></ToolButton>
      {turns.map(([t, f], i) => (
        <ToolButton key={i} $lead={i ? 0 : 7} aria-label={`移动 ${i + 1}`}><Move turn={t} flip={f} /></ToolButton>
      ))}
      {turns.map(([t, f], i) => (
        <ToolButton key={i} $lead={i ? 0 : 7} aria-label={`旋转 ${i + 1}`}><Spin turn={t} flip={f} /></ToolButton>
      ))}
      <Grip $lead={1} />
      {[0, 1, 2, 3, 4, 5].map((k) => (
        <ToolButton key={k} aria-label={`视图 ${k + 1}`}><Cube kind={k} /></ToolButton>
      ))}
      {[0, 1, 2, 3].map((k) => (
        <ToolButton key={k} aria-label={`等轴视图 ${k + 1}`}><IsoCube n={k} /></ToolButton>
      ))}
    </Toolbar>
  );
}

const g1 = "#5bbb45";
const g2 = "#eff6d3";

function PickToolbar() {
  return (
    <SideTools>
      <SideGrip />
      <ToolButton aria-label="全部"><Mesh top={g1} bottom={g1} /></ToolButton>
      <ToolButton aria-label="已选"><Mesh top="#6dbb5c" bottom={g2} mark="check" /></ToolButton>
      <ToolButton aria-label="未选"><Mesh top={g2} bottom={g1} mark="check" /></ToolButton>
      <ToolButton aria-label="可见"><Mesh top="#6dbb5c" bottom={g2} mark="eye" /></ToolButton>
      <ToolButton aria-label="不可见"><Mesh top={g2} bottom={g1} mark="eye" /></ToolButton>
      <ToolButton aria-label="外轮廓"><Mesh top="#e5f3cf" bottom="#e5f3cf" dim /></ToolButton>
      <ToolButton aria-label="表面"><Blob /></ToolButton>
      <ToolButton aria-label="上表面"><Slab /></ToolButton>
      <ToolButton aria-label="下表面"><Slab light /></ToolButton>
      <SideGap />
      <ToolButton aria-label="列表选择"><ListPick /></ToolButton>
      <SideGap />
      <ToolButton aria-label="结束列表"><Hash /></ToolButton>
    </SideTools>
  );
}

const TaskSvg = ({ children }: { children: React.ReactNode }) => (
  <svg width="32" height="32" viewBox="0 0 32 32" fill="none" aria-hidden="true">{children}</svg>
);

const taskIcons: [string, React.ReactNode][] = [
  ["远程桌面", <TaskSvg>
    <path d="M3 2l21 2-2 18-20-4z" fill="#1c2fb0" />
    <path d="M10 3l8 0-5 16-6-1z" fill="#6a86e4" />
    <path d="M7 26l12-4 5 3-12 5z" fill="#b6c0d4" />
    <path d="M12 20h6v5h-6z" fill="#8791ac" />
    <circle cx="23" cy="25" r="6" fill="#d7dcdc" stroke="#9ba3a3" />
    <path d="M20 23l3 2-3 3M26 22l-3 2 3 3" stroke="#38793f" />
  </TaskSvg>],
  ["文件资源管理器", <TaskSvg>
    <path d="M2 3h11l3 3h14v22H2z" fill="#f7d766" />
    <path d="M2 3h11l2 3-2 2H2z" fill="#b8912c" />
    <path d="M6 28V18h20v10h-6v-5h-8v5z" fill="#4f9aa6" />
  </TaskSvg>],
  ["设置", <TaskSvg>
    <circle cx="16" cy="16" r="7" stroke="#27363b" strokeWidth="3" />
    {[0, 45, 90, 135, 180, 225, 270, 315].map((r) => (
      <path key={r} d="M14 5h4v4h-4z" fill="#27363b" transform={`rotate(${r} 16 16)`} />
    ))}
  </TaskSvg>],
  ["Python 文件", <TaskSvg>
    <path d="M3 2h17l6 6v22H3z" fill="#f4f7f6" />
    <path d="M6 7h12M6 11h14M6 15h10M6 19h8M6 23h8" stroke="#bcc7cb" />
    <path d="M16 15c0-4 9-4 9 0v5h-7v5h-3c-4 0-4-7 0-7h6" fill="#36627e" />
    <path d="M28 19c3 0 3 7 0 8h-3v2c0 3-8 3-8 0v-4h8v-6z" fill="#e8cf44" />
  </TaskSvg>],
  ["记事本", <TaskSvg>
    <path d="M22 4l6-1 2 24-6 3z" fill="#55777f" />
    <path d="M11 5l16-2-6 24-19 1z" fill="#a8d4da" />
    <path d="M11 4l16-2-1 4-16 3z" fill="#e8f0ee" />
    <path d="M12 16l12-3-4 14-18 1z" fill="#79b1bb" />
  </TaskSvg>],
  ["PowerPoint", <TaskSvg>
    <circle cx="18" cy="16" r="14" fill="#e2623c" />
    <path d="M18 2a14 14 0 0114 14H18z" fill="#f59b7a" />
    <path d="M18 16h14a14 14 0 01-26 7z" fill="#d4502c" />
    <path d="M1 9h15v15H1z" fill="#b7371b" />
    <path d="M6 21v-9h4a2 2 0 010 6H6" stroke="#fff" strokeWidth="2" />
  </TaskSvg>],
  ["Edge", <TaskSvg>
    <circle cx="16" cy="16" r="15" fill="#1877c0" />
    <path d="M2 12C6-3 31-1 31 15c0 7-9 8-12 5 4-6-2-11-8-9-4 1-7 2-9 5z" fill="#4bc9a0" />
    <path d="M11 14c-4 8 3 16 16 12-5 6-15 7-21 0-5-7-2-13 5-12z" fill="#12569e" />
    <path d="M13 15c3-3 8-1 6 5 2 3 8 3 12 0-3 6-13 7-17 1-1-2-2-4-1-6z" fill="#cfe6ee" />
  </TaskSvg>],
  ["录屏", <TaskSvg>
    <rect x="1" y="1" width="30" height="30" rx="6" fill="#15191f" />
    <rect x="5" y="9" width="15" height="14" rx="3" stroke="#fff" strokeWidth="2" />
    <path d="M20 14l6-4v12l-6-4z" stroke="#fff" strokeWidth="2" />
    <circle cx="10" cy="14" r="1" fill="#fff" />
  </TaskSvg>],
  ["VEGAS", <TaskSvg>
    <path d="M1 1h30v30H1z" fill="#0e2430" />
    <path d="M11 9l5 14 5-14" stroke="#7fb8dc" strokeWidth="2" />
    <path d="M21 23h10v8H21z" fill="#1b7aa5" />
    <path d="M24 25v4M27 25h2l-1 4" stroke="#bfe4f2" />
  </TaskSvg>],
  ["命令提示符", <TaskSvg>
    <path d="M2 5h28v22H2z" fill="#050708" stroke="#8b9699" strokeWidth="2" />
    <path d="M3 6h26v4L3 16z" fill="#2a3134" />
    <path d="M5 10h3M10 8l3 4M14 12h4" stroke="#eee" />
  </TaskSvg>],
];

export default function App() {
  return (
    <Window>
      <GlobalStyle />
      <TitleBar>
        <TitleText>ntat 2016.0.0 (64bit): model1.mud - [Model (View 1)]</TitleText>
        <BatteryPill />
        <CaptionButton aria-label="最小化">
          <svg width="12" height="1"><path d="M0 0h12v1H0z" fill="#111" /></svg>
        </CaptionButton>
        <CaptionButton aria-label="最大化">
          <svg width="1" height="10"><path d="M0 0h1v10H0z" fill="#111" /></svg>
        </CaptionButton>
      </TitleBar>
      <MenuBar>
        <MenuItem $cut={4}>取</MenuItem>
        <MenuItem>视图</MenuItem>
        <MenuItem>工具</MenuItem>
        <MenuItem>窗口</MenuItem>
        <MenuItem>帮助</MenuItem>
      </MenuBar>
      <MainToolbar />
      <Tabs>
        <Tab $active>分网</Tab>
        {tabs.map((t) => (
          <Tab key={t}><Mixed text={t} /></Tab>
        ))}
      </Tabs>
      <Ribbon>
        <Group $w={38} $cut>
          <CutBody>
            <Command>位<svg width="9" height="6" viewBox="0 0 9 6"><path d="M0 0h9L4 6z" fill={ink} /></svg></Command>
            <Command>分网</Command>
            <Command>号</Command>
          </CutBody>
          <GroupTitle $end>操作</GroupTitle>
        </Group>
        {groups.map((g) => (
          <Group key={g.title} $w={g.w}>
            <GroupBody $cols={g.cols}>
              {g.items.map((col, i) => (
                <GroupColumn key={i}>
                  {col.map((c) => (
                    <Command key={c}>{c}</Command>
                  ))}
                </GroupColumn>
              ))}
            </GroupBody>
            <GroupTitle>{g.title}</GroupTitle>
          </Group>
        ))}
        <Group $w={73}>
          <GroupBody $cols="max-content">
            <GroupColumn>
              <TickLabel><Tick type="checkbox" />格栅</TickLabel>
              <Command>编辑</Command>
            </GroupColumn>
          </GroupBody>
          <GroupTitle>坐标系</GroupTitle>
        </Group>
        <Group $w={218}>
          <GroupBody $cols="77px 78px max-content">
            <GroupColumn>
              <Command>新建</Command>
              <Command disabled>显示菜单</Command>
              <Command disabled>编辑</Command>
            </GroupColumn>
            <GroupColumn>
              <TickLabel $dim><Tick type="checkbox" disabled />标识</TickLabel>
              <Command disabled>显示设置</Command>
              <Command>模板文件</Command>
            </GroupColumn>
            <GroupColumn>
              <Command disabled>属性</Command>
            </GroupColumn>
          </GroupBody>
          <GroupTitle>模型部件</GroupTitle>
        </Group>
      </Ribbon>
      <Strip />
      <Body>
        <SidePanel>
          <SideHead>
            <SideTab><Latin>List</Latin></SideTab>
          </SideHead>
          <SideBody>
            <Tree>
              <TreeRow $indent={1}><Mixed text="del1" /></TreeRow>
              <TreeRow $indent={6} $alt><span><Mixed text="网格 (16944)" /></span></TreeRow>
              <TreeRow $indent={6}><span><Mixed text="实体 (1)" /></span></TreeRow>
              <TreeRow $indent={0} $alt><Folder /><span><Mixed text="实体 (1)" /></span></TreeRow>
              <TreeRow $indent={19}>
                <Tick type="checkbox" id="solid1" defaultChecked />
                <Solid />
                <label htmlFor="solid1"><Mixed text="solid1" /></label>
              </TreeRow>
            </Tree>
          </SideBody>
          <BottomTabs>
            <BottomTab>nu</BottomTab>
            <BottomTab $active>模型导航</BottomTab>
          </BottomTabs>
        </SidePanel>
        <WorkArea>
          <ViewToolbar />
          <WorkRow>
            <PickToolbar />
            <Stack>
              <Viewport>
                <ModelScene />
                <Brand>
                  MSC
                  <svg width="18" height="24" viewBox="0 0 18 24" fill="none" stroke="#a8302c">
                    <path d="M0 1c8 1 12 8 17 18" strokeWidth="2" />
                    <path d="M4 23C9 16 15 8 14 3c0-3-5-2-7 1" strokeWidth="1" />
                    <path d="M4 23c2-3 5-7 7-11" strokeWidth="3" />
                  </svg>
                  Software
                </Brand>
                <CopyDialog />
              </Viewport>
              <LogPanel>
                <LogHandle>
                  <svg width="8" height="8" viewBox="0 0 8 8" stroke="#111"><path d="M0 0l8 8M8 0L0 8" strokeWidth="1.5" /></svg>
                  <svg width="9" height="9" viewBox="0 0 9 9" stroke="#111" fill="none"><path d="M3 1h5v5H3zM1 4h4v4H1z" /></svg>
                  <LogName>Dialog</LogName>
                </LogHandle>
                <LogMain>
                  <LogText>
                    <span>{"Command > *duplicate_elements"}</span>
                    <span>{"Enter duplicate element list : all_existing"}</span>
                    <span>{"Enter duplicate element list : *fill_view"}</span>
                  </LogText>
                  <Prompt>
                    {"Enter duplicate element list :"}
                    <PromptInput />
                  </Prompt>
                </LogMain>
              </LogPanel>
            </Stack>
          </WorkRow>
        </WorkArea>
      </Body>
      <Status><StatusBox /></Status>
      <TaskBar>
        <TaskStart aria-label="搜索">
          <svg width="5" height="14" viewBox="0 0 5 14"><path d="M-2 1a6 6 0 010 12" fill="none" stroke="#111" strokeWidth="2" /></svg>
        </TaskStart>
        {taskIcons.map(([name, icon]) => (
          <TaskItem key={name} aria-label={name}>{icon}</TaskItem>
        ))}
        <TaskItem $active aria-label="Marc Mentat"><MLogo size={32} /></TaskItem>
        <Tray>
          <TrayButton aria-label="显示隐藏的图标">
            <svg width="16" height="10" viewBox="0 0 16 10" fill="none" stroke="#111"><path d="M1 9l7-7 7 7" strokeWidth="1.5" /></svg>
          </TrayButton>
          <TrayButton aria-label="安全卫士">
            <svg width="20" height="20" viewBox="0 0 20 20">
              <circle cx="10" cy="10" r="9" fill="#e8e04a" />
              <path d="M2 8a8 8 0 0115-4M18 12a8 8 0 01-15 4" fill="none" stroke="#3d9c3a" strokeWidth="3" />
              <path d="M10 6v8M6 10h8" stroke="#2a7a2c" strokeWidth="2" />
            </svg>
          </TrayButton>
          <TrayButton aria-label="电池">
            <svg width="20" height="16" viewBox="0 0 20 16" fill="none" stroke="#111">
              <path d="M6 4h12v9H4V8" /><path d="M6 6h11v6H6zM18 6h2v4h-2z" fill="#111" />
              <path d="M1 1v3h4V1M3 4v4" />
            </svg>
          </TrayButton>
          <TrayButton aria-label="网络">
            <svg width="18" height="18" viewBox="0 0 18 18" fill="none" stroke="#333">
              <path d="M1 17A16 16 0 0117 1M5 17A12 12 0 0117 5M9 17a8 8 0 018-8M12 17a5 5 0 015-4" />
              <circle cx="15" cy="16" r="1" fill="#111" />
            </svg>
          </TrayButton>
          <TrayButton aria-label="音量">
            <svg width="20" height="16" viewBox="0 0 20 16" fill="none" stroke="#111">
              <path d="M1 5h3l4-4v14l-4-4H1z" /><path d="M11 5c1 2 1 4 0 6" />
              <path d="M14 3c2 3 2 7 0 10M17 1c3 4 3 10 0 14" stroke="#9aa5ad" />
            </svg>
          </TrayButton>
          <TrayButton>中</TrayButton>
          <TrayButton $w={42}><Ime>拼</Ime></TrayButton>
          <Clock><span>22:57</span><span>2021/5</span></Clock>
        </Tray>
      </TaskBar>
      <Caption>我的世界里只有一个你，没想到小丑竟是我自己。</Caption>
    </Window>
  );
}
